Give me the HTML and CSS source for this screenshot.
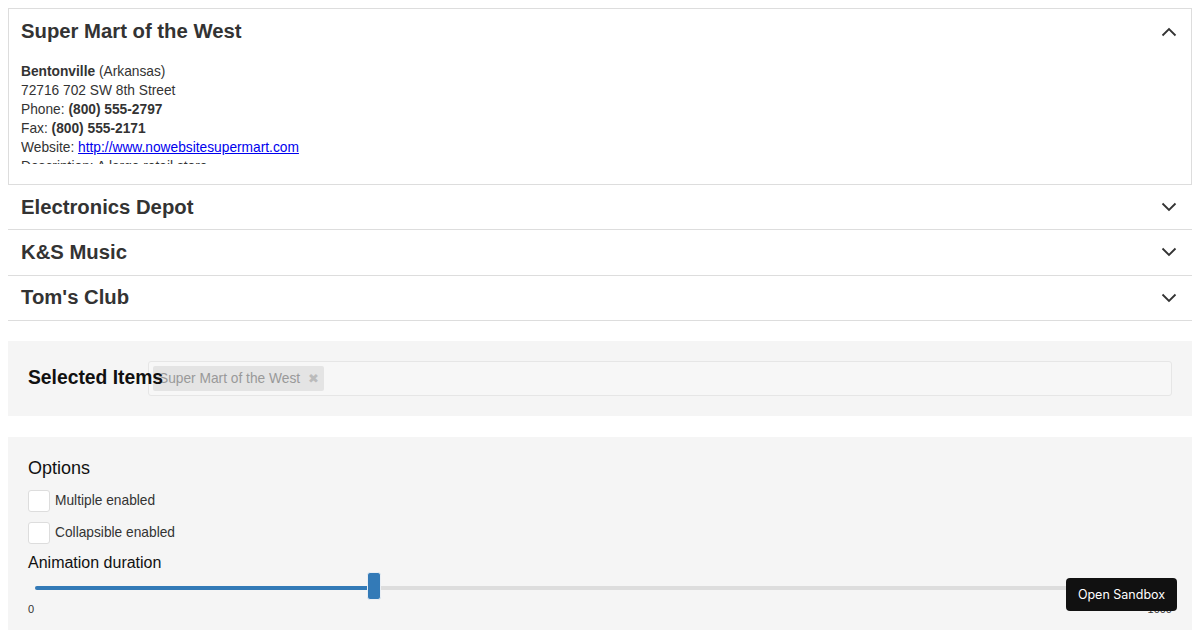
FILE: index.html
```html
<!DOCTYPE html>
<html>
<head>
<meta charset="utf-8">
<link rel="stylesheet" href="styles.css">
</head>
<body>
<div class="accordion">
  <div class="item open">
    <div class="header">
      <span class="title">Super Mart of the West</span>
      <svg class="chev" width="16" height="10" viewBox="0 0 16 10"><path d="M1.5 8.5 L8 2 L14.5 8.5" fill="none" stroke="#333" stroke-width="1.8"/></svg>
    </div>
    <div class="content">
      <div class="inner">
        <div><b>Bentonville</b> (Arkansas)</div>
        <div>72716 702 SW 8th Street</div>
        <div>Phone: <b>(800) 555-2797</b></div>
        <div>Fax: <b>(800) 555-2171</b></div>
        <div>Website: <a href="#">http://www.nowebsitesupermart.com</a></div>
        <div>Description: A large retail store</div>
      </div>
    </div>
  </div>
  <div class="item">
    <div class="header">
      <span class="title">Electronics Depot</span>
      <svg class="chev" width="16" height="10" viewBox="0 0 16 10"><path d="M1.5 1.5 L8 8 L14.5 1.5" fill="none" stroke="#333" stroke-width="1.8"/></svg>
    </div>
  </div>
  <div class="item">
    <div class="header">
      <span class="title">K&amp;S Music</span>
      <svg class="chev" width="16" height="10" viewBox="0 0 16 10"><path d="M1.5 1.5 L8 8 L14.5 1.5" fill="none" stroke="#333" stroke-width="1.8"/></svg>
    </div>
  </div>
  <div class="item">
    <div class="header">
      <span class="title">Tom's Club</span>
      <svg class="chev" width="16" height="10" viewBox="0 0 16 10"><path d="M1.5 1.5 L8 8 L14.5 1.5" fill="none" stroke="#333" stroke-width="1.8"/></svg>
    </div>
  </div>
</div>

<div class="panel selected">
  <span class="sel-label">Selected Items</span>
  <div class="tagbox">
    <span class="chip">Super Mart of the West <span class="x">✖</span></span>
  </div>
</div>

<div class="panel options">
  <div class="opt-title">Options</div>
  <label class="check"><span class="box"></span>Multiple enabled</label>
  <label class="check"><span class="box"></span>Collapsible enabled</label>
  <div class="anim-title">Animation duration</div>
  <div class="slider">
    <div class="track"><div class="fill" style="width:30%"></div><div class="thumb" style="left:30%"></div></div>
  </div>
  <div class="ticks"><span>0</span><span>1000</span></div>
</div>

<div class="sandbox">Open Sandbox</div>
</body>
</html>
```

FILE: styles.css
```css
html, body {
  margin: 0;
  padding: 0;
  background: #fff;
}
body {
  padding: 8px 8px 0;
  font-family: "Liberation Sans", Arial, sans-serif;
  color: #333;
  height: 630px;
  box-sizing: border-box;
  overflow: hidden;
}
.accordion {
  margin-bottom: 20px;
}
.item {
  border-bottom: 1px solid #ddd;
}
.item.open {
  border: 1px solid #ddd;
}
.header {
  height: 45px;
  display: flex;
  align-items: center;
  justify-content: space-between;
  padding: 0 14px 0 12px;
}
.item:not(.open) .header {
  height: 44.34px;
  padding-left: 13px;
  padding-right: 15px;
}
.title {
  font-size: 20.3px;
  font-weight: bold;
  color: #333;
}
.content {
  padding: 8px 12px 20.5px;
}
.inner {
  height: 101.5px;
  overflow: hidden;
  font-size: 13.75px;
  line-height: 19px;
}
.inner a {
  color: #00e;
  text-decoration: underline;
}
.panel {
  background: #f5f5f5;
  padding: 20px;
}
.selected {
  display: flex;
  align-items: center;
  margin-bottom: 21px;
}
.sel-label {
  position: relative;
  z-index: 1;
  width: 120px;
  flex: none;
  white-space: nowrap;
  font-size: 19.3px;
  font-weight: bold;
  color: #111;
}
.tagbox {
  flex: 1;
  height: 35px;
  box-sizing: border-box;
  border: 1px solid #e6e6e6;
  border-radius: 3px;
  background: #f7f7f7;
  padding: 4px;
  display: flex;
  align-items: center;
}
.chip {
  background: #e4e4e4;
  height: 25px;
  display: flex;
  align-items: center;
  padding: 0 5px 0 6px;
  font-size: 13.75px;
  color: #999;
  border-radius: 2px;
}
.chip .x {
  color: #bbb;
  font-size: 13px;
  margin-left: 8px;
}
.options {
  height: 193px;
  box-sizing: border-box;
  padding-top: 20px;
}
.opt-title {
  font-size: 18px;
  color: #111;
  line-height: 22px;
  margin-bottom: 11px;
}
.check {
  display: flex;
  align-items: center;
  font-size: 13.75px;
  color: #333;
  margin-bottom: 10px;
}
.box {
  width: 20px;
  height: 20px;
  background: #fff;
  border: 1px solid #ddd;
  border-radius: 3px;
  margin-right: 5px;
}
.anim-title {
  font-size: 16px;
  color: #111;
  line-height: 20px;
  margin-top: -1px;
}
.slider {
  padding: 0 7px;
  height: 28px;
  margin-top: 1px;
  display: flex;
  align-items: center;
}
.track {
  position: relative;
  flex: 1;
  height: 4px;
  border-radius: 2px;
  background: #ddd;
}
.fill {
  height: 4px;
  border-radius: 2px;
  background: #337ab7;
}
.thumb {
  position: absolute;
  top: -14px;
  width: 14px;
  height: 28px;
  margin-left: -7px;
  box-sizing: border-box;
  background: #337ab7;
  border: 1px solid #e9eef4;
  border-radius: 3px;
}
.ticks {
  display: flex;
  justify-content: space-between;
  font-size: 11px;
  color: #333;
  margin-top: 1px;
}
.sandbox {
  position: fixed;
  right: 23px;
  bottom: 19px;
  width: 111px;
  height: 33px;
  box-sizing: border-box;
  background: #111;
  color: #fff;
  border-radius: 4px;
  font-family: Inter, "Liberation Sans", sans-serif;
  font-size: 12.5px;
  display: flex;
  align-items: center;
  justify-content: center;
}
```
